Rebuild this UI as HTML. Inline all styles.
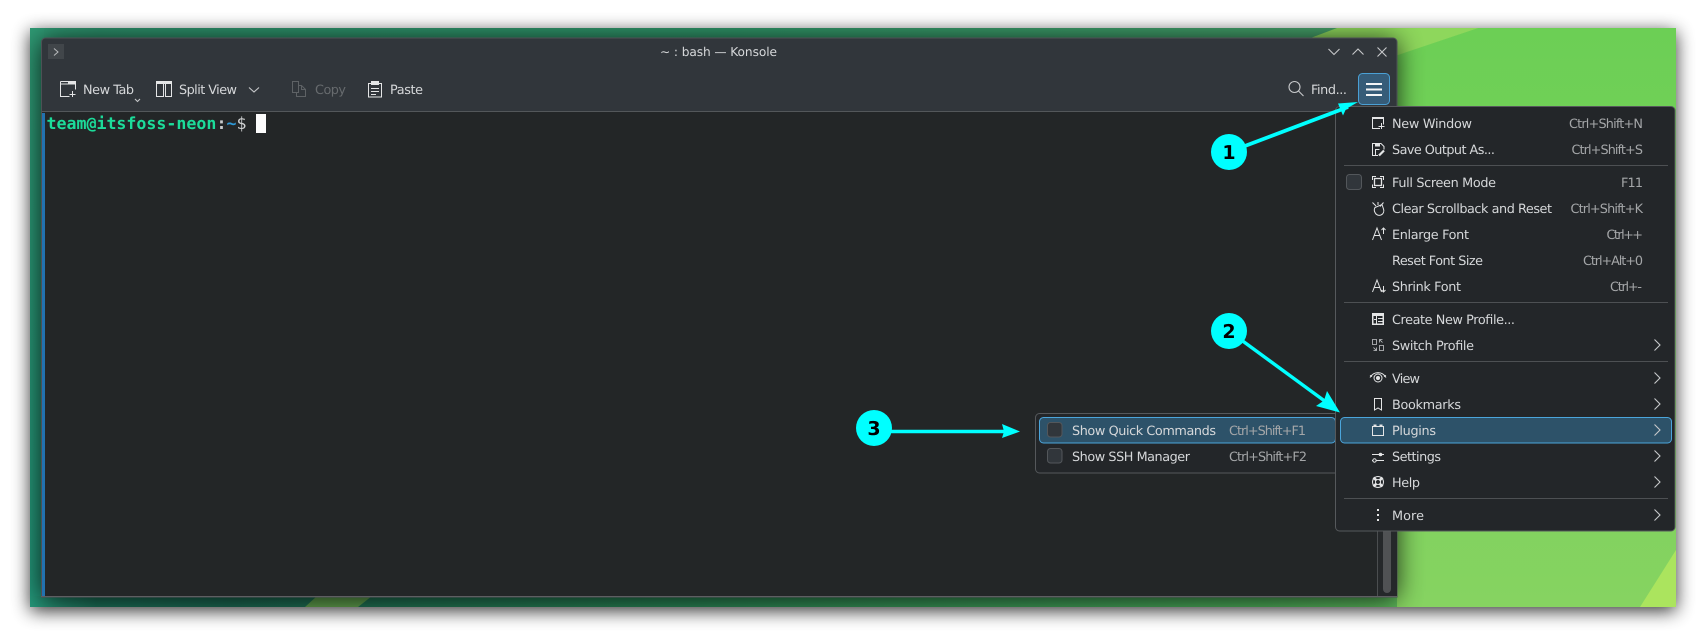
<!DOCTYPE html>
<html><head><meta charset="utf-8"><title>Konsole</title>
<style>
html,body{margin:0;padding:0;background:#fff;width:1706px;height:639px;overflow:hidden}
svg{display:block}
text{font-family:"DejaVu Sans","Liberation Sans",sans-serif;font-size:12.8px;fill:#d6d8da;text-rendering:geometricPrecision}
.s{fill:#a4a6a8}
.i{fill:none;stroke:#e4e5e6;stroke-width:1}
.c{fill:none;stroke:#c6c8ca;stroke-width:1.1}
.n{font-weight:bold;font-size:19px;fill:#000;text-anchor:middle}
.m{font-family:"DejaVu Sans Mono","Liberation Mono",monospace;font-size:16.6px}
</style></head><body>
<svg xmlns="http://www.w3.org/2000/svg" width="1706" height="639" viewBox="0 0 1706 639">
<defs>
<filter id="b1" x="-10%" y="-20%" width="120%" height="140%"><feGaussianBlur stdDeviation="9"/></filter>
<filter id="b2" x="-10%" y="-20%" width="120%" height="140%"><feGaussianBlur stdDeviation="13"/></filter>
<linearGradient id="top" x1="0" x2="1" y1="0" y2="0"><stop offset="0" stop-color="#2f9a74"/><stop offset=".05" stop-color="#2c8f6a"/><stop offset=".5" stop-color="#2f9468"/><stop offset="1" stop-color="#48a068"/></linearGradient>
<linearGradient id="left" x1="0" x2="0" y1="0" y2="1"><stop offset="0" stop-color="#2f9a74"/><stop offset="1" stop-color="#23977a"/></linearGradient>
<linearGradient id="bot" x1="0" x2="1" y1="0" y2="0"><stop offset="0" stop-color="#25987a"/><stop offset=".04" stop-color="#1b6e56"/><stop offset=".12" stop-color="#1a6650"/><stop offset=".4" stop-color="#288252"/><stop offset=".75" stop-color="#4aa856"/><stop offset="1" stop-color="#7fce5e"/></linearGradient>
<linearGradient id="rt" x1="0" x2="0" y1="0" y2="1"><stop offset="0" stop-color="#6ccf55"/><stop offset="1" stop-color="#86d361"/></linearGradient>
<clipPath id="desk"><rect x="30" y="28" width="1646" height="579"/></clipPath>
</defs>

<!-- outer shadow -->
<rect x="30" y="32" width="1646" height="579" fill="#000" opacity=".8" filter="url(#b1)"/>

<!-- desktop -->
<g clip-path="url(#desk)">
<rect x="30" y="28" width="1646" height="579" fill="#2a8560"/>
<rect x="30" y="28" width="1400" height="12" fill="url(#top)"/>
<rect x="30" y="28" width="14" height="579" fill="url(#left)"/>
<rect x="30" y="596" width="1646" height="11" fill="url(#bot)"/>
<rect x="1397" y="28" width="279" height="579" fill="url(#rt)"/>
<polygon points="1337,28 1478,28 1398,55 1397,55 1300,55 1300,42" fill="#8ed75c"/>
<polygon points="1397,55 1478,28 1397,28" fill="#8ed75c"/>
<polygon points="305,607 317,596 372,596 358,607" fill="#5c9a4a"/>
<polygon points="1640,607 1676,550 1676,607" fill="#abe45e"/>
<!-- window shadow on desktop -->
<rect x="41" y="40" width="1356" height="559" fill="#000" opacity=".8" filter="url(#b2)"/>
</g>

<!-- window -->
<path d="M41.5 597V42a4 4 0 0 1 4-4H1393a4 4 0 0 1 4 4V597Z" fill="#31363b" stroke="#4d5155"/>
<rect x="42" y="112" width="1355" height="484" fill="#232627"/>
<rect x="42" y="111" width="1355" height="1" fill="#53575a"/>
<rect x="42" y="113" width="3" height="483" fill="#2272b0"/>
<rect x="41" y="596" width="1356" height="1" fill="#5e5e62"/>
<rect x="1377" y="112" width="1" height="484" fill="#4b4e50"/>
<rect x="1378" y="112" width="19" height="484" fill="#25282a"/>
<rect x="1383" y="112" width="8" height="481" rx="4" fill="#505254"/>

<!-- title bar -->
<rect x="48" y="44" width="16" height="15" fill="#41464a"/>
<path d="M54 48.500l4 3.500-4 3.500" fill="none" stroke="#b9bbbd"/>
<text x="660" y="56" textLength="117" lengthAdjust="spacing" style="font-size:12.2px">~ : bash — Konsole</text>
<path d="M1328.500 49l5.500 5.500 5.500-5.500" class="c"/>
<path d="M1352.500 54.500l5.500-5.500 5.500 5.500" class="c"/>
<path d="M1377.500 47.500l9 9m0-9l-9 9" class="c"/>

<!-- toolbar -->
<path d="M60.500 81.500h15.500M60.500 81.500v15h9M75.500 81.500v8M60.500 84h15" class="i"/><rect x="68" y="81" width="8" height="3" fill="#e4e5e6"/><path d="M72.500 91v6M69.500 94.500h6" class="i"/>
<text x="83" y="94" textLength="51" lengthAdjust="spacing">New Tab</text>
<path d="M135 99l2.500 2.500 2.500-2.500" class="c"/>
<rect x="156.500" y="81.500" width="7" height="15" class="i"/><rect x="165.500" y="81.500" width="6" height="15" class="i"/><rect x="156" y="81" width="16" height="3" fill="#e4e5e6"/>
<text x="179" y="94" textLength="58" lengthAdjust="spacing">Split View</text>
<path d="M249 87.500l5 4.500 5-4.500" class="c"/>
<path d="M292.500 81.500h6v11h-6zM298.500 85.500h3l4 4v7h-9v-4M301.500 85.500v4h4" fill="none" stroke="#5e6265"/>
<text x="315" y="94" textLength="31" lengthAdjust="spacing" style="fill:#676b6e">Copy</text>
<path d="M371 83.500h-2.500v13.500h13v-13.500h-2.500" class="i"/><rect x="371" y="81" width="8" height="4" fill="#e4e5e6"/><path d="M371 88.500h8M371 91.500h8M371 94.500h5" class="i"/>
<text x="390" y="94" textLength="33" lengthAdjust="spacing">Paste</text>
<circle cx="1294.500" cy="87" r="5.500" class="c"/><path d="M1298.500 91l5 5" class="c"/>
<text x="1311" y="94" textLength="36" lengthAdjust="spacing">Find...</text>
<rect x="1358.500" y="73.500" width="31" height="31" rx="4" fill="#365c78" stroke="#4aa0d5"/>
<path d="M1366 84h16M1366 89.500h16M1366 95h16" stroke="#f4f5f6" stroke-width="2" fill="none"/>

<!-- terminal text -->
<text x="46.500" y="129" class="m" style="fill:#1cdc9a;font-weight:bold">team@itsfoss-neon</text>
<text x="216.500" y="129" class="m" style="fill:#c9cbcc;font-weight:bold">:</text>
<text x="226.500" y="129" class="m" style="fill:#2e9ad8;font-weight:bold">~</text>
<text x="236.500" y="129" class="m" style="fill:#d0d2d3">$</text>
<rect x="256" y="114" width="10" height="19" fill="#fcfcfc"/>

<!-- submenu -->
<rect x="1035.500" y="413.500" width="304" height="59.500" rx="4" fill="#232629" stroke="#55585b"/>
<rect x="1039.500" y="417.500" width="296" height="25.500" rx="4" fill="#2d5269" stroke="#4ba5db"/>
<rect x="1047.500" y="422.500" width="14.500" height="14.500" rx="3" fill="#31363b" stroke="#53575b"/>
<rect x="1047.500" y="448.500" width="14.500" height="14.500" rx="3" fill="#31363b" stroke="#53575b"/>
<text x="1072" y="435" textLength="144" lengthAdjust="spacing">Show Quick Commands</text>
<text x="1229" y="435" textLength="77" lengthAdjust="spacing" class="s">Ctrl+Shift+F1</text>
<text x="1072" y="461" textLength="118" lengthAdjust="spacing">Show SSH Manager</text>
<text x="1229" y="461" textLength="78" lengthAdjust="spacing" class="s">Ctrl+Shift+F2</text>

<!-- main menu -->
<rect x="1335.500" y="106.500" width="339.500" height="424.500" rx="4" fill="#232629" stroke="#56595c"/>
<path d="M1344 165.500h324M1344 302.500h324M1344 361.500h324M1344 498.500h324" stroke="#4d5053" fill="none"/>
<rect x="1340.500" y="417.500" width="331" height="25.500" rx="4" fill="#2d5269" stroke="#4ba5db"/>

<text x="1392" y="128" textLength="80" lengthAdjust="spacing">New Window</text>
<text x="1569" y="128" textLength="74" lengthAdjust="spacing" class="s">Ctrl+Shift+N</text>
<text x="1571.500" y="154" textLength="71.500" lengthAdjust="spacing" class="s">Ctrl+Shift+S</text>
<text x="1392" y="154" textLength="103" lengthAdjust="spacing">Save Output As...</text>
<text x="1392" y="187" textLength="104" lengthAdjust="spacing">Full Screen Mode</text>
<text x="1621" y="187" textLength="22" lengthAdjust="spacing" class="s">F11</text>
<text x="1392" y="213" textLength="160" lengthAdjust="spacing">Clear Scrollback and Reset</text>
<text x="1570.500" y="213" textLength="72.500" lengthAdjust="spacing" class="s">Ctrl+Shift+K</text>
<text x="1392" y="239" textLength="77" lengthAdjust="spacing">Enlarge Font</text>
<text x="1606.500" y="239" textLength="36.500" lengthAdjust="spacing" class="s">Ctrl++</text>
<text x="1392" y="265" textLength="91" lengthAdjust="spacing">Reset Font Size</text>
<text x="1583" y="265" textLength="60" lengthAdjust="spacing" class="s">Ctrl+Alt+0</text>
<text x="1392" y="291" textLength="69" lengthAdjust="spacing">Shrink Font</text>
<text x="1610" y="291" textLength="32" lengthAdjust="spacing" class="s">Ctrl+-</text>
<text x="1392" y="324" textLength="123" lengthAdjust="spacing">Create New Profile...</text>
<text x="1392" y="350" textLength="82" lengthAdjust="spacing">Switch Profile</text>
<text x="1392" y="383" textLength="28" lengthAdjust="spacing">View</text>
<text x="1392" y="409" textLength="69" lengthAdjust="spacing">Bookmarks</text>
<text x="1392" y="435" textLength="44" lengthAdjust="spacing">Plugins</text>
<text x="1392" y="461" textLength="49" lengthAdjust="spacing">Settings</text>
<text x="1392" y="487" textLength="28" lengthAdjust="spacing">Help</text>
<text x="1392" y="520" textLength="32" lengthAdjust="spacing">More</text>

<path d="M1654.500 339.500l5.500 5.500-5.500 5.500M1654.500 372.500l5.500 5.500-5.500 5.500M1654.500 398.500l5.500 5.500-5.500 5.500M1654.500 424.500l5.500 5.500-5.500 5.500M1654.500 450.500l5.500 5.500-5.500 5.500M1654.500 476.500l5.500 5.500-5.500 5.500M1654.500 509.500l5.500 5.500-5.500 5.500" class="c"/>

<!-- menu icons -->
<rect x="1346.500" y="174.500" width="15" height="15" rx="3" fill="#31363b" stroke="#53575b"/>
<path d="M1380 128.500h-7.500v-11h11v7" class="i"/><rect x="1372" y="117" width="12" height="2" fill="#e4e5e6"/><path d="M1381.500 123v6M1378.500 126.500h6" class="i"/>
<path d="M1378 155.500h-5.500v-12h8.500l3 3v3" class="i"/><rect x="1375" y="143" width="5" height="3.500" fill="#e4e5e6"/><path d="M1375.500 155v-5.500h4" class="i"/><path d="M1379 155.500l5-5" stroke="#e4e5e6" stroke-width="2.200" fill="none"/>
<path d="M1372.500 180v-3.500h3.500M1380 176.500h3.500v3.500M1383.500 184.500v3h-3.500M1376 187.500h-3.500v-3" class="i"/><rect x="1374.500" y="178.500" width="7" height="7" class="i" style="stroke-width:1.300"/>
<path d="M1372.500 202.500l3.500 3.500M1383.500 202.500l-3.500 4M1375 207.500l7-3 1.500 4.500a4.500 4.500 0 0 1-8.500 3.500a5 5 0 0 1 0-5zM1378 202v3" class="i"/>
<path d="M1372.500 240l4.500-12 4.500 12M1374.500 235.500h5M1383.500 234v-6M1381.500 230l2-2 2 2" class="i"/>
<path d="M1372.500 292l4.500-12 4.500 12M1374.500 287.500h5M1383.500 286v6M1381.500 290l2 2 2-2" class="i"/>
<rect x="1372" y="313" width="12" height="12" fill="#e4e5e6"/><rect x="1373.500" y="316" width="9" height="7.500" fill="#232629"/><path d="M1376.500 316v7.500M1378 318.500h4.500M1378 321.500h4.500M1374 319.500h2" stroke="#e4e5e6" fill="none"/>
<path d="M1372.500 339.500h4v5h-4zM1379.500 345.500h4v5h-4zM1379.500 339.500l3 3M1379.500 342.500v-3h3M1376.500 350.500l-3-3M1376.500 347.500v3h-3" fill="none" stroke="#c6c8ca" stroke-width=".8"/>
<path d="M1370 377.500c4-6.500 12-6.500 16 0M1372 376.500l-2-1M1384 376.500l2-1" class="i"/><circle cx="1378" cy="378" r="4" class="i"/><circle cx="1378" cy="378" r="2" fill="#e4e5e6"/>
<path d="M1374.500 410v-11.500h7v11.500l-3.500-2z" class="i"/>
<rect x="1372.500" y="426.500" width="11" height="9" class="i"/><path d="M1374 425h2v1h-2zM1380 425h2v1h-2z" fill="#e4e5e6" stroke="#e4e5e6"/>
<path d="M1372 454.500h7M1382 454.500h2M1376 460.500h8M1372 460.500h1" class="i"/><circle cx="1380.500" cy="454.500" r="1.800" fill="#e4e5e6"/><circle cx="1374.500" cy="460.500" r="1.700" class="i"/>
<circle cx="1378" cy="482" r="5.500" class="i"/><circle cx="1378" cy="482" r="2.500" class="i"/><path d="M1373.500 477.500l3 3M1382.500 477.500l-3 3M1373.500 486.500l3-3M1382.500 486.500l-3-3" stroke="#e4e5e6" stroke-width="2.600" fill="none"/>
<path d="M1377 509h2v2h-2zM1377 514h2v2h-2zM1377 519h2v2h-2z" fill="#e4e5e6"/>

<!-- annotations -->
<g fill="#00ffff" stroke="none">
<path d="M1229 152L1348 107" stroke="#00ffff" stroke-width="3.800" fill="none"/>
<polygon points="1358,102 1338,103.500 1343,115.500 1346,109"/>
<circle cx="1229" cy="152" r="18"/>
<path d="M1229 331L1326 402" stroke="#00ffff" stroke-width="3.400" fill="none"/>
<polygon points="1340,412.500 1316,406 1324,400.500 1327,391"/>
<circle cx="1229" cy="331" r="18"/>
<path d="M874 431.500H1008" stroke="#00ffff" stroke-width="3.400" fill="none"/>
<polygon points="1020,431.500 1002,424 1004,431.500 1002,438"/>
<circle cx="874" cy="428" r="18"/>
</g>
<text x="1229" y="159" class="n">1</text>
<text x="1229" y="338" class="n">2</text>
<text x="874" y="435" class="n">3</text>
</svg>
</body></html>
